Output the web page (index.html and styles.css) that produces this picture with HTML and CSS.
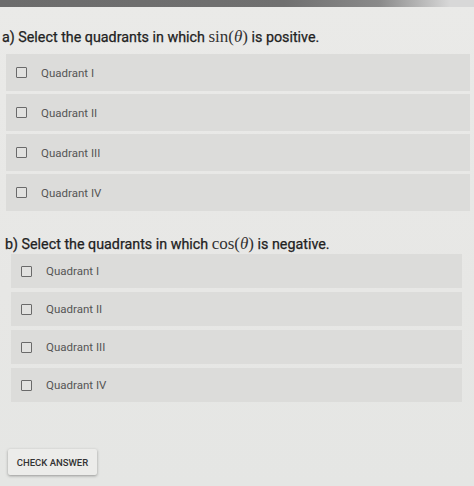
FILE: index.html
```html
<!DOCTYPE html>
<html>
<head>
<meta charset="utf-8">
<link rel="stylesheet" href="styles.css">
</head>
<body>
<div class="topbar"></div>
<section class="part part-a">
  <h2 class="q">a) Select the quadrants in which <span class="m">sin(<i>θ</i>)</span> is positive.</h2>
  <div class="opts">
    <label class="opt"><span class="box"></span><span class="lbl">Quadrant I</span></label>
    <label class="opt"><span class="box"></span><span class="lbl">Quadrant II</span></label>
    <label class="opt"><span class="box"></span><span class="lbl">Quadrant III</span></label>
    <label class="opt"><span class="box"></span><span class="lbl">Quadrant IV</span></label>
  </div>
</section>
<section class="part part-b">
  <h2 class="q">b) Select the quadrants in which <span class="m">cos(<i>θ</i>)</span> is negative.</h2>
  <div class="opts">
    <label class="opt"><span class="box"></span><span class="lbl">Quadrant I</span></label>
    <label class="opt"><span class="box"></span><span class="lbl">Quadrant II</span></label>
    <label class="opt"><span class="box"></span><span class="lbl">Quadrant III</span></label>
    <label class="opt"><span class="box"></span><span class="lbl">Quadrant IV</span></label>
  </div>
</section>
<div class="actions"><button class="check">CHECK ANSWER</button></div>
</body>
</html>
```
FILE: styles.css
```css
html, body { margin: 0; padding: 0; }
body {
  width: 474px; height: 486px; overflow: hidden;
  background: linear-gradient(180deg, #eaeae8 0%, #e7e7e5 60%, #e5e6e4 100%);
  font-family: Roboto, "Liberation Sans", sans-serif;
  color: #2a2a2a;
}
.topbar {
  height: 7px;
  background: linear-gradient(90deg, #6c6c6c 0%, #707070 60%, #8a8a8a 80%, #d8d8d8 95%);
}
.part { display: flex; flex-direction: column; }
.part-a { padding: 20px 4px 0 2px; }
.part-b { padding: 23px 12px 0 5px; }
.q {
  margin: 0 0 7px 0;
  font-size: 14.3px; font-weight: 400; color: #222;
  line-height: 20px; -webkit-text-stroke: 0.25px #222;
}
.part-b .q { margin-bottom: 0; }
.m { font-family: "Liberation Serif", "DejaVu Serif", serif; font-weight: 400; font-size: 17px; color: #333; -webkit-text-stroke: 0; }
.opts { display: flex; flex-direction: column; gap: 3px; padding-left: 4px; }
.opt {
  display: flex; align-items: center; gap: 14px;
  height: 37px; padding-left: 10px;
  background: #dcdcda;
}
.part-b .opts { padding-left: 6px; gap: 4px; }
.part-b .opt { height: 34px; }
.box {
  width: 9px; height: 9px; border: 1.5px solid #6a6a6a; border-radius: 1px; background: #e2e2e0;
}
.lbl { font-size: 11.5px; color: #555; }
.actions { padding: 47px 0 0 8px; }
.check {
  font-family: Roboto, "Liberation Sans", sans-serif;
  font-size: 9.5px; font-weight: 500; color: #333;
  width: 89px; height: 26px; padding: 0;
  background: #ececea; border: none; border-radius: 2px;
  box-shadow: 0 1px 3px rgba(0,0,0,0.35);
}
```
